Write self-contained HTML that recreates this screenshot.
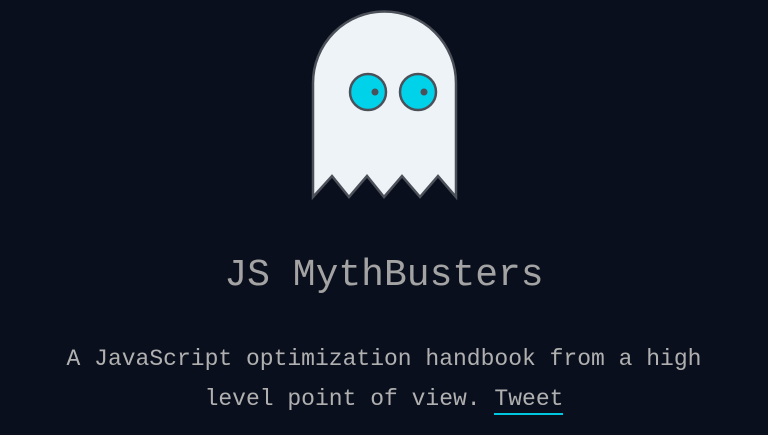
<!DOCTYPE html>
<html><head><meta charset="utf-8"><style>
html,body{margin:0;padding:0;background:#0a0f1d;width:768px;height:435px;overflow:hidden}
svg{position:absolute;left:0;top:0}
.t{position:absolute;left:0;width:768px;text-align:center;font-family:"Liberation Mono",monospace;white-space:nowrap}
h1{position:absolute;margin:0;left:0;width:768px;top:254px;text-align:center;font:38px "Liberation Mono",monospace;color:#a3a3a3;font-weight:normal;line-height:44px}
p{position:absolute;margin:0;left:0;width:768px;top:339px;text-align:center;font:23px "Liberation Mono",monospace;color:#b0b0b0;line-height:40px}
a{color:#b0b0b0;text-decoration:none;border-bottom:2px solid #00c8e0;padding-bottom:1px}
</style></head><body>
<svg width="768" height="435">
<path d="M313,197 L313,83 A71.5,71.5 0 0 1 456,83 L456,197 L438,176 L420,197 L402,176 L384,197 L367,176 L349,197 L332,176 Z" fill="#eef3f7" stroke="#4b5059" stroke-width="2.5" stroke-linejoin="miter"/>
<circle cx="368" cy="92" r="18" fill="#00d2ea" stroke="#4b5059" stroke-width="2.5"/>
<circle cx="418" cy="92" r="18" fill="#00d2ea" stroke="#4b5059" stroke-width="2.5"/>
<circle cx="375" cy="92" r="3.5" fill="#4b5059"/>
<circle cx="424" cy="92" r="3.5" fill="#4b5059"/>
</svg>
<h1>JS MythBusters</h1>
<p>A JavaScript optimization handbook from a high<br>level point of view. <a>Tweet</a></p>
</body></html>
